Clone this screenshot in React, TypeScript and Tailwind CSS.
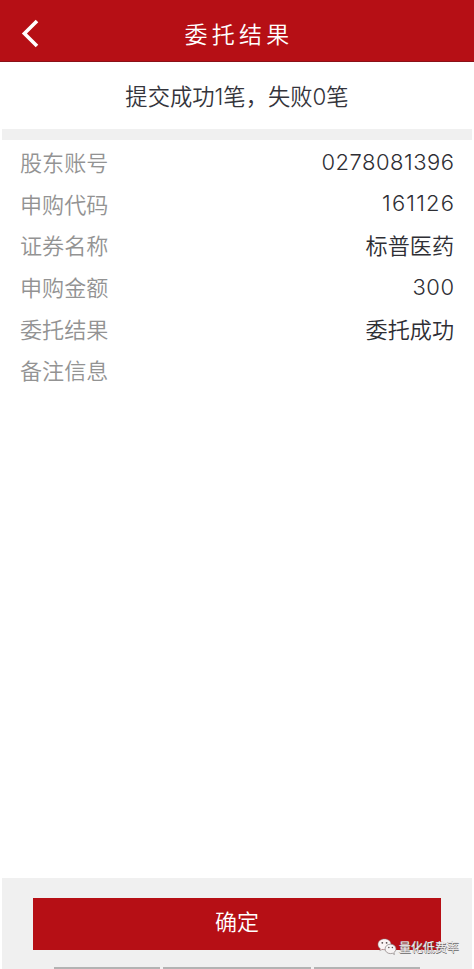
import React from 'react';

const rows = [
  { label: '股东账号', value: '0278081396', valueClass: 'tracking-[0.5px] -mr-[0.5px]' },
  { label: '申购代码', value: '161126', valueClass: 'tracking-[1.2px] -mr-[1.2px]' },
  { label: '证券名称', value: '标普医药' },
  { label: '申购金额', value: '300', valueClass: 'tracking-[0.5px] -mr-[0.5px]' },
  { label: '委托结果', value: '委托成功' },
  { label: '备注信息', value: '' },
];

const Header: React.FC = () => (
  <header className="relative flex h-[61.5px] items-center justify-center border-b border-[#8a1118] bg-[#b60f15] pt-[6px]">
    <button className="absolute left-[21px] top-[19px]" aria-label="返回">
      <svg className="h-[30px] w-[18px]" viewBox="0 0 18 30" fill="none" stroke="white" strokeWidth="3.6">
        <path d="M16 2 L3.4 14.5 L16 27" />
      </svg>
    </button>
    <h1 className="pl-[4px] text-[23px] leading-[30px] tracking-[4.2px] text-white">委托结果</h1>
  </header>
);

const WechatIcon: React.FC = () => (
  <svg className="h-[18px] w-[20px]" viewBox="0 0 20 18">
    <path
      d="M7.5 1 C3.7 1 1 3.4 1 6.4 C1 8.2 1.9 9.7 3.4 10.7 L2.8 12.8 L5.2 11.5 C6 11.7 6.8 11.8 7.5 11.8 C11.3 11.8 14 9.4 14 6.4 C14 3.4 11.3 1 7.5 1Z"
      fill="#fbf4f4"
      stroke="#8d8585"
      strokeWidth="0.5"
    />
    <path
      d="M13.5 6.2 C10.4 6.2 8.1 8.3 8.1 10.9 C8.1 13.6 10.4 15.6 13.5 15.6 C14.2 15.6 14.8 15.5 15.4 15.3 L17.4 16.5 L16.9 14.5 C18.2 13.7 19 12.4 19 10.9 C19 8.3 16.6 6.2 13.5 6.2Z"
      fill="#f7f4f4"
      stroke="#857c7c"
      strokeWidth="0.7"
    />
    <circle cx="5.3" cy="4.8" r="0.9" fill="#574c4c" />
    <circle cx="9.6" cy="4.8" r="0.9" fill="#574c4c" />
    <circle cx="11.8" cy="9.6" r="0.75" fill="#574c4c" />
    <circle cx="15.4" cy="9.6" r="0.75" fill="#574c4c" />
  </svg>
);

export default function App() {
  return (
    <div className="relative flex h-[969px] w-[474px] flex-col overflow-hidden bg-white font-['Noto_Sans_CJK_SC',sans-serif] font-[350]">
      <Header />

      <p className="flex h-[67.5px] items-center justify-center pt-px text-[22.3px] leading-[30px] text-[#34343b]">
        <span>
          提交成功<span className="font-['Inter'] font-light">1</span>笔，失败
          <span className="font-['Inter'] font-light">0</span>笔
        </span>
      </p>

      <div className="mx-[2px] h-[11px] shrink-0 bg-[#f0f0f0]" />

      <dl className="flex-1 px-[20px] pt-px text-[22.1px]">
        {rows.map((row) => (
          <div key={row.label} className="flex h-[41.6px] items-center justify-between">
            <dt className="text-[#939393]">{row.label}</dt>
            <dd className="text-[#2e2e34]">
              {row.valueClass ? (
                <span className={`block pt-px font-['Inter'] text-[22px] font-light ${row.valueClass}`}>{row.value}</span>
              ) : (
                row.value
              )}
            </dd>
          </div>
        ))}
      </dl>

      <footer className="mx-[2px] flex h-[91px] shrink-0 flex-col justify-between bg-[#f0f0f0] pt-[19.5px]">
        <button className="mx-[31px] h-[52.5px] bg-[#b60f15] pb-[6px] text-[22px] text-white">确定</button>
        <div className="flex justify-center gap-[3px]">
          <span className="h-[2px] w-[106px] bg-[#b3b3b3]" />
          <span className="h-[2px] w-[148px] bg-[#b3b3b3]" />
          <span className="h-[2px] w-[106px] bg-[#b3b3b3]" />
        </div>
      </footer>

      {/* account watermark */}
      <div className="absolute left-[377px] top-[938px] flex items-center gap-[2px]">
        <WechatIcon />
        <span className="whitespace-nowrap text-[12px] font-normal leading-[18px] text-[#f4f1f1] [text-shadow:0.6px_0.6px_0.5px_#666,-0.4px_-0.4px_0.5px_#888]">
          量化低费率
        </span>
      </div>
    </div>
  );
}
